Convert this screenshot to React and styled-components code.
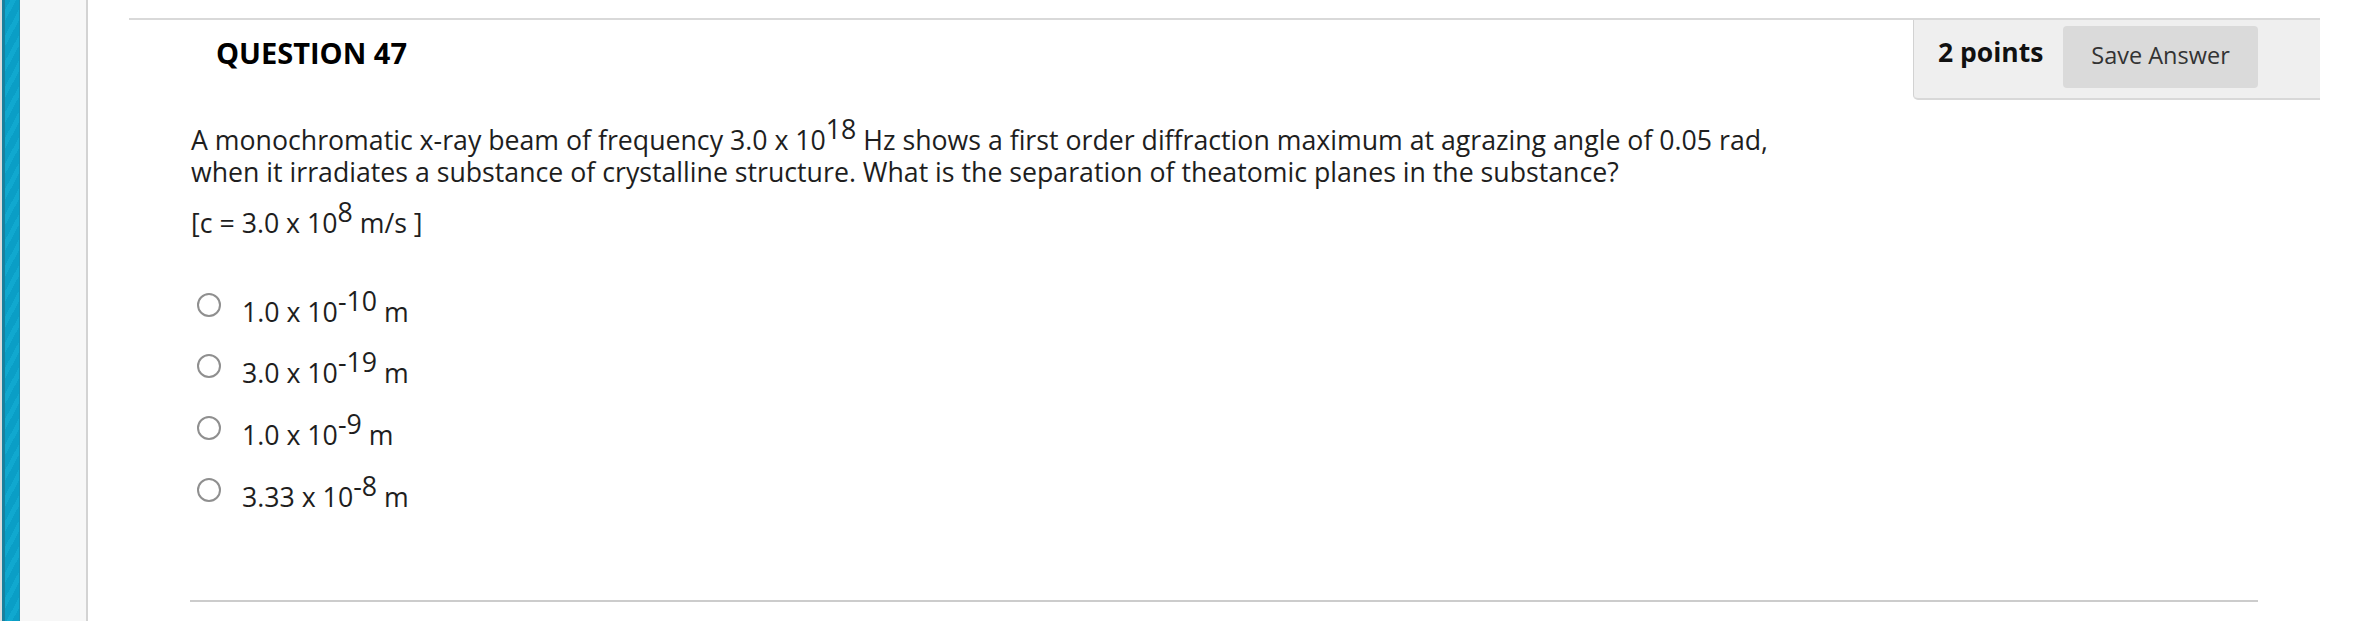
import React from 'react';
import styled, { createGlobalStyle } from 'styled-components';

const GlobalStyle = createGlobalStyle`
html, body {
    margin: 0;
    padding: 0;
    background: #ffffff;
}
body {
    font-family: "Open Sans", "Liberation Sans", sans-serif;
    color: #1e1e1e;
}
`;

const options = [
    { base: '1.0 x 10', exp: '-10' },
    { base: '3.0 x 10', exp: '-19' },
    { base: '1.0 x 10', exp: '-9' },
    { base: '3.33 x 10', exp: '-8' },
];

const App = () => {
    return (
        <>
            <GlobalStyle />
            <Page>
                <Rail />
                <SidePanel />
                <Main>
                    <Header>
                        <Title>QUESTION 47</Title>
                        <PointsBox>
                            <Points>2 points</Points>
                            <SaveButton type="button">Save Answer</SaveButton>
                        </PointsBox>
                    </Header>
                    <Body>
                        <Prompt>
                            A monochromatic x-ray beam of frequency 3.0 x 10<Sup>18</Sup> Hz shows a first order diffraction maximum at agrazing angle of 0.05 rad,
                            <br />
                            when it irradiates a substance of crystalline structure. What is the separation of theatomic planes in the substance?
                        </Prompt>
                        <Constant>
                            [c = 3.0 x 10<Sup>8</Sup> m/s ]
                        </Constant>
                        <Options>
                            {options.map((o, i) => (
                                <Option key={i}>
                                    <Radio />
                                    <span>
                                        {o.base}<Sup>{o.exp}</Sup> m
                                    </span>
                                </Option>
                            ))}
                        </Options>
                        <Divider />
                    </Body>
                </Main>
            </Page>
        </>
    );
};

const Page = styled.div`
display: flex;
height: 621px;
overflow: hidden;
`;
const Rail = styled.div`
flex: 0 0 18px;
border-left: 2px solid #dedede;
background: repeating-linear-gradient(-62deg, #0a9ec6 0 7px, #10a8cf 7px 12px);
box-shadow: inset 3px 0 0 #17819f, inset -1px 0 0 #1a8eae;
`;
const SidePanel = styled.div`
flex: 0 0 66px;
background: #f7f7f7;
border-right: 2px solid #d3d3d3;
`;
const Main = styled.div`
flex: 1;
padding: 18px 40px 0 41px;
`;
const Header = styled.div`
display: flex;
justify-content: space-between;
align-items: flex-start;
border-top: 2px solid #d9d9d9;
`;
const Title = styled.h2`
margin: 16px 0 0 0;
padding-left: 87px;
font-size: 29px;
line-height: 34px;
font-weight: 700;
color: #000;
`;
const PointsBox = styled.div`
display: flex;
align-items: flex-start;
width: 320px;
padding: 6px 62px 10px 24px;
background: #efefef;
border-left: 1px solid #d2d2d2;
border-bottom: 2px solid #d8d8d8;
border-bottom-left-radius: 5px;
`;
const Points = styled.span`
margin-top: 11px;
font-size: 26.5px;
line-height: 31px;
font-weight: 700;
color: #111;
white-space: nowrap;
`;
const SaveButton = styled.button`
width: 195px;
height: 62px;
margin-left: auto;
padding: 0 0 4px;
border: none;
border-radius: 4px;
background: #dadada;
font-family: "Open Sans", "Liberation Sans", sans-serif;
font-size: 23.5px;
color: #333;
`;
const Body = styled.div`
padding: 23.5px 62px 0 62px;
`;
const Prompt = styled.p`
margin: 0;
font-size: 26.7px;
line-height: 32px;
`;
const Constant = styled(Prompt)`
margin-top: 19px;
`;
const Sup = styled.sup`
font-size: 1em;
line-height: 0;
vertical-align: 11px;
`;
const Options = styled.div`
display: flex;
flex-direction: column;
gap: 29.7px;
margin-top: 57px;
padding-left: 6px;
`;
const Option = styled.label`
display: flex;
align-items: flex-start;
gap: 21px;
font-size: 26.7px;
line-height: 32px;
`;
const Radio = styled.span`
flex: 0 0 auto;
width: 20px;
height: 20px;
margin-top: -3px;
border: 2px solid #8f8f8f;
border-radius: 50%;
background: #fff;
`;
const Divider = styled.div`
margin-top: 87.4px;
height: 2px;
margin-left: -1px;
background: #cccccc;
`;

export default App;
